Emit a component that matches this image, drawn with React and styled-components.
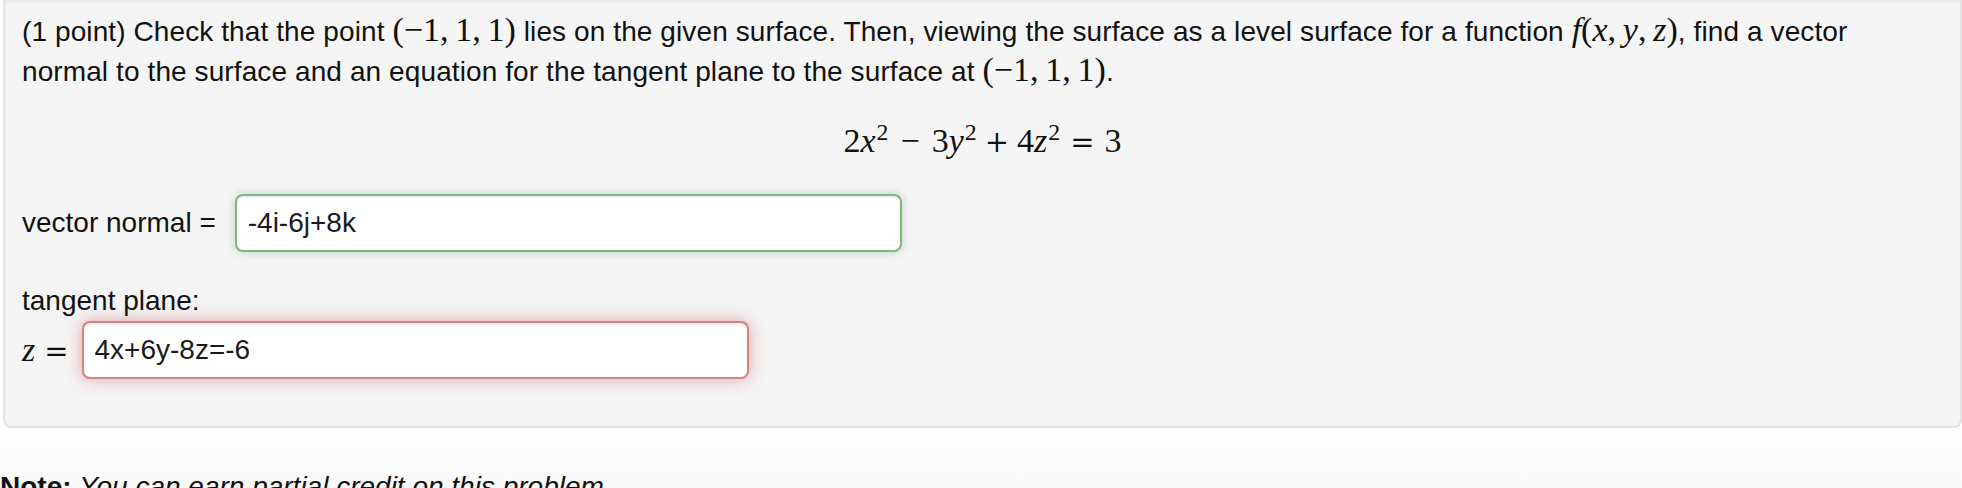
import React from "react";
import styled, { createGlobalStyle, css } from "styled-components";

const Global = createGlobalStyle`
  html, body {
    margin: 0;
    padding: 0;
    background: #ffffff;
  }
  body {
    font-family: "Liberation Sans", Arial, Helvetica, sans-serif;
    font-size: 28px;
    line-height: 40px;
    color: #111111;
  }
`;

const Page = styled.div`
  height: 488px;
  overflow: hidden;
  background: linear-gradient(to bottom, #ffffff 0%, #ffffff 85%, #fafafa 100%);
`;

const Panel = styled.div`
  margin-left: 3px;
  background: #f5f5f5;
  border: 2px solid #e3e3e3;
  border-top: none;
  border-radius: 0 0 8px 8px;
  padding: 12px 17px 47px 17px;
  box-shadow: inset 0 2px 2px rgba(0, 0, 0, 0.04);
`;

const Problem = styled.p`
  margin: 0;
  letter-spacing: 0.1px;
`;

const Math = styled.span`
  font-family: "Liberation Serif", "Times New Roman", serif;
  font-size: 34px;
  line-height: 1;
  letter-spacing: 0;
  white-space: nowrap;
`;

const Var = styled.i`
  font-style: italic;
`;

const Op = styled.span`
  display: inline-block;
  padding: 0 ${(p) => p.$pad || "9px"};
  ${(p) =>
    p.$wide &&
    css`
      font-family: "DejaVu Serif", "Liberation Serif", serif;
      font-size: 29px;
    `}
`;

const Sup = styled.sup`
  font-size: 70%;
  line-height: 0;
  vertical-align: 0;
  position: relative;
  top: -0.5em;
  margin-left: 1px;
`;

const DisplayEq = styled.div`
  margin-top: 29px;
  text-align: center;
  font-family: "Liberation Serif", "Times New Roman", serif;
  font-size: 34px;
  line-height: 40px;
`;

const AnswerRow = styled.div`
  display: flex;
  align-items: center;
  gap: ${(p) => p.$gap || "19px"};
  margin-top: ${(p) => p.$top || "0px"};
`;

const FieldLabel = styled.span`
  white-space: nowrap;
`;

const Heading = styled.div`
  margin-top: 29px;
`;

const statusStyles = {
  correct: css`
    border-color: rgba(81, 153, 81, 0.72);
    box-shadow: inset 0 2px 2px rgba(0, 0, 0, 0.075), 0 0 10px rgba(81, 153, 81, 0.35);
  `,
  incorrect: css`
    border-color: rgba(191, 84, 84, 0.72);
    box-shadow: inset 0 2px 2px rgba(0, 0, 0, 0.075), 0 0 16px rgba(191, 84, 84, 0.5);
  `,
};

const AnswerInput = styled.input`
  box-sizing: border-box;
  width: 667px;
  height: 58px;
  margin: 0;
  padding: 0 11px;
  background: #ffffff;
  border: 2px solid #cccccc;
  border-radius: 8px;
  font-family: "Liberation Sans", Arial, Helvetica, sans-serif;
  font-size: 28px;
  color: #1a1a1a;
  outline: none;
  ${(p) => statusStyles[p.$status]}
`;

const Note = styled.div`
  margin-top: 39px;
  white-space: nowrap;
`;

const NoteTitle = styled.b`
  font-weight: bold;
`;

const NoteText = styled.i`
  font-style: italic;
`;

function Point() {
  return (
    <Math>
      (−1,&thinsp;1,&thinsp;1)
    </Math>
  );
}

export default function App() {
  return (
    <>
      <Global />
      <Page>
        <Panel>
          <Problem>
            (1 point) Check that the point <Point /> lies on the given surface. Then, viewing the
            surface as a level surface for a function{" "}
            <Math>
              <Var>f</Var>(<Var>x</Var>,&thinsp;<Var>y</Var>,&thinsp;<Var>z</Var>)
            </Math>
            , find a vector
            <br />
            normal to the surface and an equation for the tangent plane to the surface at{" "}
            <Point />.
          </Problem>
          <DisplayEq>
            2<Var>x</Var>
            <Sup>2</Sup>
            <Op $pad="12px">−</Op>3<Var>y</Var>
            <Sup>2</Sup>
            <Op $wide $pad="8px">+</Op>4<Var>z</Var>
            <Sup>2</Sup>
            <Op $wide $pad="10px">=</Op>3
          </DisplayEq>
          <AnswerRow $top="32px">
            <FieldLabel>vector normal =</FieldLabel>
            <AnswerInput $status="correct" readOnly value="-4i-6j+8k" />
          </AnswerRow>
          <Heading>tangent plane:</Heading>
          <AnswerRow $gap="4px">
            <Math>
              <Var>z</Var>
              <Op $wide $pad="9px">=</Op>
            </Math>
            <AnswerInput $status="incorrect" readOnly value="4x+6y-8z=-6" />
          </AnswerRow>
        </Panel>
        <Note>
          <NoteTitle>Note:</NoteTitle> <NoteText>You can earn partial credit on this problem.</NoteText>
        </Note>
      </Page>
    </>
  );
}
